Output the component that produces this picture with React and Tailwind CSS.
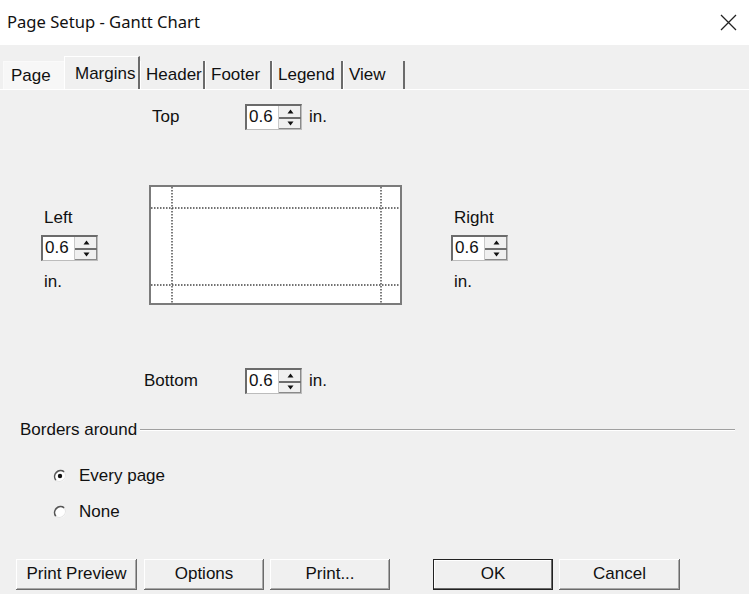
import React from "react";

const sans = { fontFamily: '"Liberation Sans", Arial, sans-serif' };

function Arrow({ up }) {
  return (
    <svg width="7" height="5" viewBox="0 0 7 5" className="block">
      {up ? <path d="M3.5 0.5 L6.5 4.5 L0.5 4.5 Z" fill="#111" /> : <path d="M0.5 0.5 L6.5 0.5 L3.5 4.5 Z" fill="#111" />}
    </svg>
  );
}

function Spin({ value = "0.6" }) {
  return (
    <div className="flex h-[26px] w-[57px] border-l-2 border-t-2 border-r border-b border-l-[#6b6b6b] border-t-[#6b6b6b] border-r-[#bcbcbc] border-b-[#bcbcbc] bg-white">
      <div className="flex-1 pl-[2px] text-[17px] leading-[22px] text-[#111]">{value}</div>
      <div className="flex w-[23px] flex-col border-l border-[#c8c8c8] bg-[#f0f0f0] shadow-[inset_-1px_-1px_0_#8a8a8a]">
        <div className="flex flex-1 items-center justify-center">
          <Arrow up />
        </div>
        <div className="h-[2px] bg-[#6e6e6e]" />
        <div className="flex flex-1 items-center justify-center">
          <Arrow />
        </div>
      </div>
    </div>
  );
}

function Radio({ checked, label }) {
  return (
    <div className="flex h-[36px] items-center">
      <svg width="14" height="14" viewBox="0 0 14 14" className="ml-[53px] mr-[12px]">
        <circle cx="7" cy="7" r="6" fill="#fff" />
        <path d="M11.2 2.8 A6 6 0 0 0 2.8 11.2" fill="none" stroke="#555" strokeWidth="1.6" />
        <path d="M2.8 11.2 A6 6 0 0 0 11.2 2.8" fill="none" stroke="#e6e6e6" strokeWidth="1.2" />
        {checked && <circle cx="7" cy="7" r="2.2" fill="#111" />}
      </svg>
      <span className="text-[17px] text-[#111]">{label}</span>
    </div>
  );
}

function Btn({ children, ok, className = "" }) {
  return (
    <div
      className={
        "flex h-[31px] w-[120px] items-center justify-center bg-[#f0f0f0] text-[17px] text-[#111] " +
        (ok
          ? "border border-[#222] shadow-[inset_-1px_-1px_0_#6b6b6b,inset_1px_1px_0_#fff] "
          : "shadow-[inset_-1px_-1px_0_#6b6b6b,inset_1px_1px_0_#fff,inset_-2px_-2px_0_#a8a8a8] ") +
        className
      }
    >
      {children}
    </div>
  );
}

export default function App() {
  const tabs = ["Header", "Footer", "Legend", "View"];
  const tabWidths = ["w-[65px]", "w-[67px]", "w-[71px]", "w-[62px]"];

  return (
    <div className="h-[594px] w-[749px] overflow-hidden bg-[#f0f0f0]" style={sans}>
      {/* title bar */}
      <div className="flex h-[45px] items-center justify-between bg-white pl-[7px] pr-[12px]">
        <span className="text-[16.6px] text-[#111]" style={{ fontFamily: '"Noto Sans", "Open Sans", sans-serif' }}>
          Page Setup - Gantt Chart
        </span>
        <svg width="17" height="17" viewBox="0 0 17 17">
          <path d="M1 1 L16 16 M16 1 L1 16" stroke="#222" strokeWidth="1.3" />
        </svg>
      </div>

      {/* tabs */}
      <div className="mt-[12px] flex h-[33px] items-end border-b border-white pl-[3px] text-[17px] text-[#111]">
        <div className="flex h-[28px] w-[61px] items-center border-l border-t border-[#fafafa] bg-[#f7f7f7] pl-[7px]">Page</div>
        <div className="flex h-[33px] w-[76px] items-start border-l border-t border-white border-r-2 border-r-[#6b6b6b] pl-[10px] pt-[4px]">
          Margins
        </div>
        {tabs.map((t, i) => (
          <div
            key={t}
            className={"flex h-[28px] items-center border-l border-white border-r-2 border-r-[#6b6b6b] pl-[5px] " + tabWidths[i]}
          >
            {t}
          </div>
        ))}
      </div>

      {/* top */}
      <div className="mt-[14px] flex h-[26px] items-center text-[17px] text-[#111]">
        <span className="ml-[152px] w-[93px]">Top</span>
        <Spin />
        <span className="ml-[7px]">in.</span>
      </div>

      {/* middle */}
      <div className="mt-[55px] flex items-start text-[17px] text-[#111]">
        <div className="ml-[41px] mt-[22px] flex w-[57px] flex-col">
          <span className="ml-[3px] leading-[22px]">Left</span>
          <div className="mt-[6px]">
            <Spin />
          </div>
          <span className="ml-[3px] mt-[10px] leading-[22px]">in.</span>
        </div>
        <div className="relative ml-[51px] h-[120px] w-[253px] border-2 border-[#7b7b7b] bg-white">
          <svg width="249" height="116" className="absolute left-0 top-0">
            <g stroke="#444" strokeWidth="1.4" strokeDasharray="1.5 1.5">
              <line x1="0" y1="21" x2="249" y2="21" />
              <line x1="0" y1="98" x2="249" y2="98" />
              <line x1="21" y1="0" x2="21" y2="116" />
              <line x1="230" y1="0" x2="230" y2="116" />
            </g>
          </svg>
        </div>
        <div className="ml-[49px] mt-[22px] flex w-[57px] flex-col">
          <span className="ml-[3px] leading-[22px]">Right</span>
          <div className="mt-[6px]">
            <Spin />
          </div>
          <span className="ml-[3px] mt-[10px] leading-[22px]">in.</span>
        </div>
      </div>

      {/* bottom */}
      <div className="mt-[63px] flex h-[26px] items-center text-[17px] text-[#111]">
        <span className="ml-[144px] w-[101px]">Bottom</span>
        <Spin />
        <span className="ml-[7px]">in.</span>
      </div>

      {/* borders around */}
      <div className="ml-[20px] mr-[14px] mt-[23px] flex items-center text-[17px] text-[#111]">
        <span>Borders around</span>
        <div className="ml-[3px] h-[2px] flex-1 border-t border-[#a0a0a0] border-b-white bg-white" />
      </div>

      <div className="mt-[15px]">
        <Radio checked label="Every page" />
        <Radio label="None" />
      </div>

      {/* buttons */}
      <div className="mt-[29px] flex items-center pl-[16px]">
        <Btn className="w-[121px]">Print Preview</Btn>
        <Btn className="ml-[7px] w-[119px]">Options</Btn>
        <Btn className="ml-[6px] w-[119px]">Print...</Btn>
        <Btn ok className="ml-[43px]">OK</Btn>
        <Btn className="ml-[6px] w-[121px]">Cancel</Btn>
      </div>
    </div>
  );
}
